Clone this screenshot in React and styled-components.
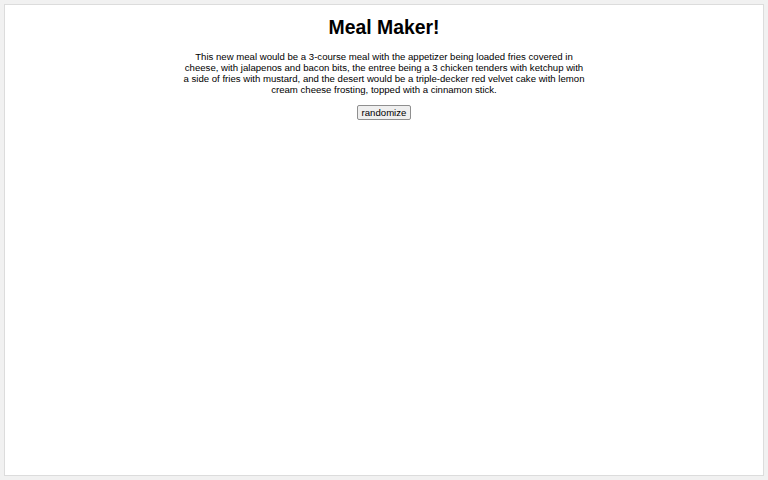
import React, { useState } from 'react';
import styled, { createGlobalStyle } from 'styled-components';

const GlobalStyle = createGlobalStyle`
  html, body {
    margin: 0;
    height: 100%;
    background: #f1f1f1;
  }
  body {
    padding: 4px;
    box-sizing: border-box;
    font-family: "Liberation Sans", Arial, sans-serif;
  }
  #root {
    height: 100%;
  }
`;

const Frame = styled.main`
  box-sizing: border-box;
  height: 100%;
  background: #fff;
  border: 1px solid #dcdcdc;
  display: flex;
  flex-direction: column;
  align-items: center;
  padding-top: 11px;
`;

const Title = styled.h1`
  margin: 0;
  font-size: 19.4px;
  font-weight: bold;
  color: #000;
`;

const Blurb = styled.p`
  margin: 12px 0 0;
  max-width: 402px;
  font-size: 9.6px;
  line-height: 11px;
  text-align: center;
  color: #000;
`;

const Button = styled.button`
  margin-top: 10px;
  font-family: "Liberation Sans", Arial, sans-serif;
  font-size: 9.6px;
  padding: 1px 4px;
  background: #efefef;
  border: 1px solid #8f8f8f;
  border-radius: 2px;
  color: #000;
`;

const meal =
  'This new meal would be a 3-course meal with the appetizer being loaded fries covered in cheese, with jalapenos and bacon bits, the entree being a 3 chicken tenders with ketchup with a side of fries with mustard, and the desert would be a triple-decker red velvet cake with lemon cream cheese frosting, topped with a cinnamon stick.';

export default function App() {
  const [text] = useState(meal);
  return (
    <>
      <GlobalStyle />
      <Frame>
        <Title>Meal Maker!</Title>
        <Blurb>{text}</Blurb>
        <Button>randomize</Button>
      </Frame>
    </>
  );
}
